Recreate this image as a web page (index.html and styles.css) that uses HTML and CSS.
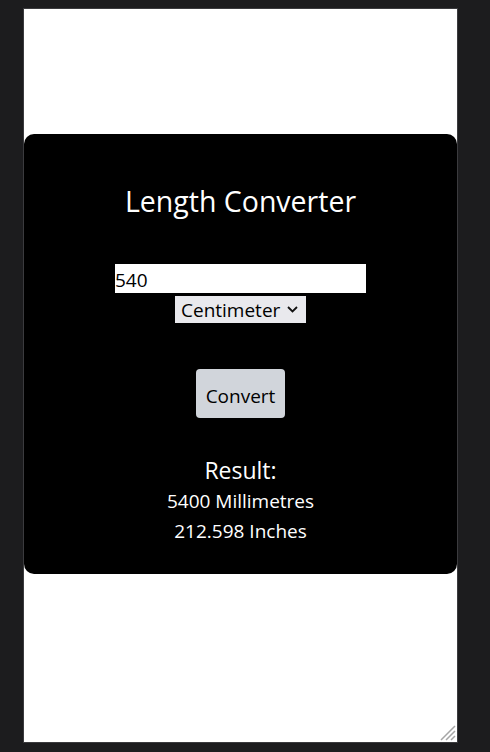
FILE: index.html
```html
<!doctype html>
<html>
<head>
<meta charset="UTF-8">
<title>Length Converter</title>
<link rel="stylesheet" href="styles.css">
</head>
<body>
<div class="frame">
  <div class="card">
    <h1 class="title">Length Converter</h1>
    <input class="amount" type="text" value="540">
    <select class="unit">
      <option>Centimeter</option>
      <option>Millimetre</option>
      <option>Inch</option>
    </select>
    <button class="convert">Convert</button>
    <div class="result">
      <h2 class="result_title">Result:</h2>
      <div class="result_line">5400 Millimetres</div>
      <div class="result_line">212.598 Inches</div>
    </div>
  </div>
  <svg class="grip" width="17" height="17" viewBox="0 0 17 17">
    <path d="M16 2 L2 16 M16 7 L7 16 M16 12 L12 16" stroke="#a6a6a6" stroke-width="1.5"/>
  </svg>
</div>
</body>
</html>
```
FILE: styles.css
```css
body {
    margin: 0;
    padding: 8px 32px 9px 23px;
    background-color: #1c1c1e;
    font-family: "Open Sans", "Noto Sans", sans-serif;
}
.frame {
    position: relative;
    border: 1px solid #3b3b3e;
    background-color: #ffffff;
    padding-top: 125px;
    box-sizing: border-box;
    height: 735px;
}
.card {
    background-color: #000000;
    color: #ffffff;
    border-radius: 10px;
    height: 440px;
    box-sizing: border-box;
    padding-top: 50px;
    display: flex;
    flex-direction: column;
    align-items: center;
}
.title {
    margin: 0;
    font-size: 28.5px;
    font-weight: normal;
    line-height: 34px;
}
.amount {
    margin-top: 46px;
    width: 251px;
    height: 29px;
    box-sizing: border-box;
    border: 0;
    padding: 3px 0 0 0;
    font-family: inherit;
    font-size: 19px;
    color: #000000;
    background-color: #ffffff;
    outline: none;
}
.unit {
    appearance: none;
    -webkit-appearance: none;
    margin-top: 3px;
    width: 131px;
    height: 27px;
    box-sizing: border-box;
    border: 0;
    border-radius: 0;
    padding: 2px 0 0 6px;
    font-family: inherit;
    font-size: 19px;
    line-height: 25px;
    background-color: #e9e9ed;
    background-image: url("data:image/svg+xml,%3Csvg xmlns='http://www.w3.org/2000/svg' width='11' height='7' viewBox='0 0 11 7'%3E%3Cpath d='M1 1 L5.5 5.5 L10 1' fill='none' stroke='%23111' stroke-width='1.8'/%3E%3C/svg%3E");
    background-repeat: no-repeat;
    background-position: right 8px center;
    color: #000000;
}
.convert {
    margin-top: 46px;
    width: 89px;
    height: 49px;
    border: 0;
    border-radius: 4px;
    background-color: #d1d5db;
    color: #000000;
    font-family: inherit;
    font-size: 19px;
    padding: 4px 0 0 0;
}
.result {
    margin-top: 36px;
    text-align: center;
}
.result_title {
    margin: 0;
    font-size: 23px;
    font-weight: normal;
    line-height: 32px;
}
.result_line {
    font-size: 19px;
    line-height: 30px;
}
.grip {
    position: absolute;
    right: 1px;
    bottom: 1px;
}
```
